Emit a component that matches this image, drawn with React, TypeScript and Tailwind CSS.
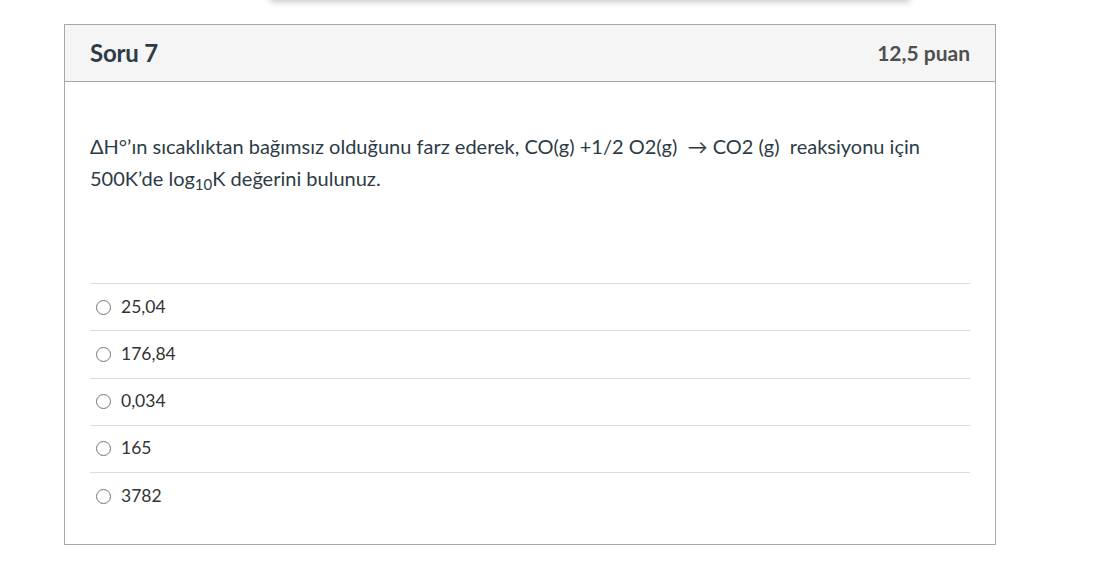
import React from "react";

const answers = ["25,04", "176,84", "0,034", "165", "3782"];

export default function App() {
  return (
    <div className="min-h-[578px] bg-white" style={{ fontFamily: "Lato, 'Noto Sans', sans-serif" }}>
      <div className="ml-[270px] w-[640px] h-[10px] -mt-[10px] bg-white shadow-[0_2px_6px_rgba(0,0,0,0.22)]" />
      <div className="ml-[64px] mt-[24px] w-[932px] border border-[#a8a8a8] bg-white">
        <div className="h-[57px] bg-[#f5f5f5] border-b border-[#a8a8a8] flex items-center justify-between px-[25px]">
          <span className="text-[24px] font-bold text-[#2d3b45] tracking-[-0.2px] -mt-[1px]">Soru 7</span>
          <span className="text-[21px] font-bold text-[#4f4f4f] -mt-[1px]">12,5 puan</span>
        </div>
        <div className="px-[25px] pt-[48px] pb-[25px]">
          <p className="text-[20px] leading-[32px] text-[#2d3b45]">
            ΔH°’ın sıcaklıktan bağımsız olduğunu farz ederek, CO(g) +1/2 O2(g)&nbsp; → CO2 (g)&nbsp; reaksiyonu için
            <br />
            500K’de log<sub className="text-[15px]">10</sub>K değerini bulunuz.
          </p>
          <div className="mt-[89px]">
            {answers.map((a) => (
              <div key={a} className="h-[47.25px] border-t border-[#dcdcdc] flex items-center">
                <span className="ml-[6px] w-[15px] h-[15px] rounded-full border border-[#757575] bg-white" />
                <span className="ml-[10px] text-[17.5px] text-[#333] -mt-[1px]">{a}</span>
              </div>
            ))}
          </div>
        </div>
      </div>
    </div>
  );
}
